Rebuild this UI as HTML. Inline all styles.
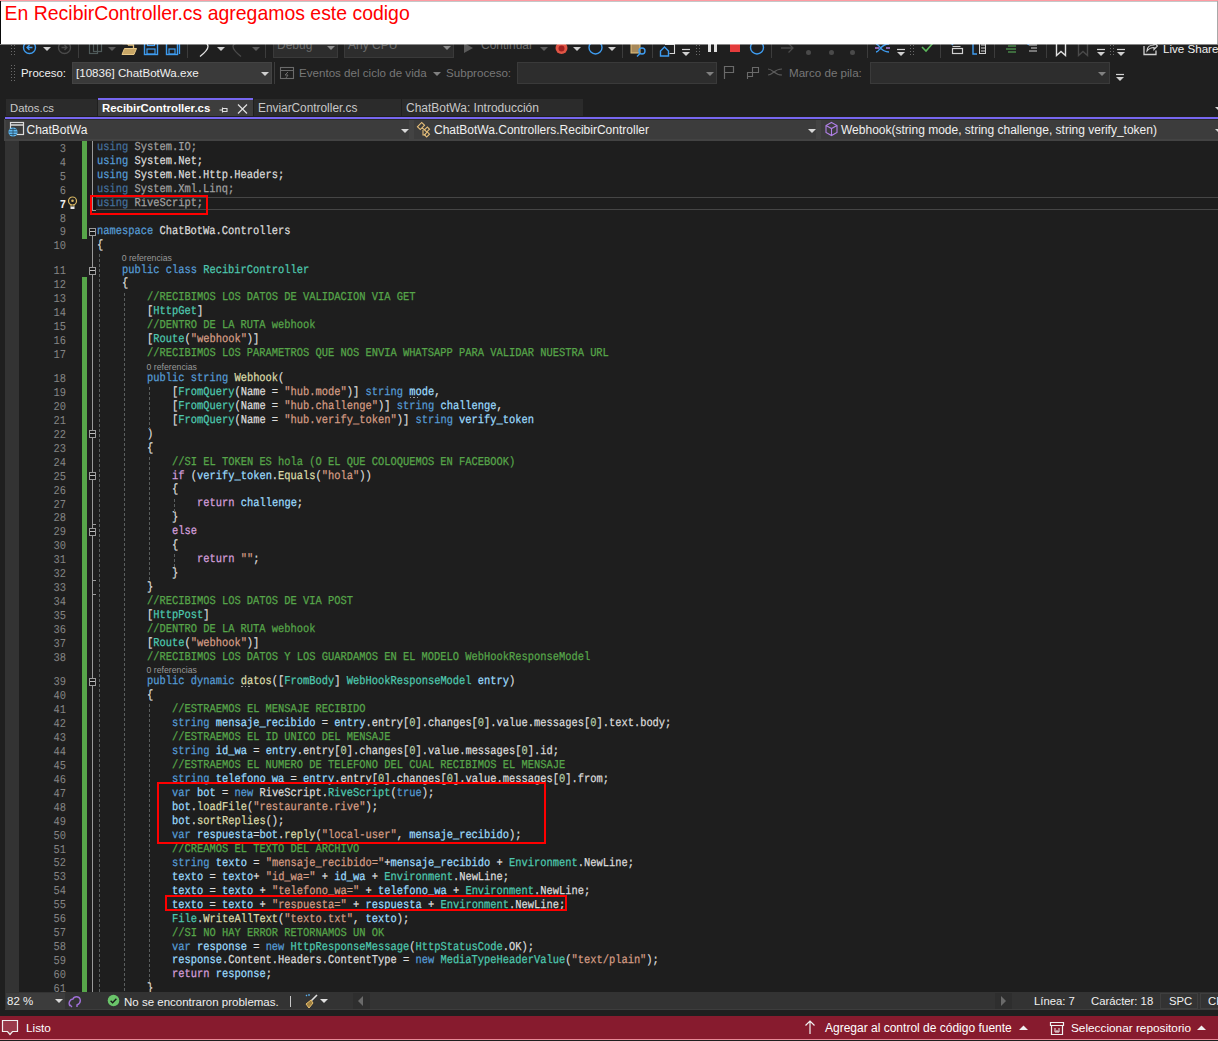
<!DOCTYPE html><html><head><meta charset="utf-8"><style>
*{margin:0;padding:0;box-sizing:border-box}
html,body{width:1218px;height:1041px;overflow:hidden;background:#1f1f1f}
body{position:relative;font-family:"Liberation Sans",sans-serif;font-size:12px;color:#dcdcdc}
.a{position:absolute}
.ui{font-family:"Liberation Sans",sans-serif;font-size:12px;white-space:pre;line-height:14px}
.cl{position:absolute;white-space:pre;text-rendering:geometricPrecision;-webkit-text-stroke:0.25px currentColor;font-family:"Liberation Mono",monospace;font-size:12px;transform:scaleX(0.8667);transform-origin:0 0;line-height:14px;letter-spacing:0.0px;height:14px}
.ln{position:absolute;white-space:pre;text-rendering:geometricPrecision;transform:scaleX(0.8667);transform-origin:100% 0;font-family:"Liberation Mono",monospace;font-size:12px;line-height:14px;letter-spacing:0.0px;color:#858585;text-align:right;width:40px;left:26px}
.lens{position:absolute;font-family:"Liberation Sans",sans-serif;font-size:8.7px;color:#999;white-space:pre;line-height:11px}
.k{color:#569cd6}.c{color:#d8a0df}.t{color:#4ec9b0}.m{color:#dcdcaa}.p{color:#9cdcfe}.s{color:#d69d85}.g{color:#57a64a}.d{color:#dcdcdc}.n{color:#b5cea8}
.dim .k{color:#45709c}.dim .d{color:#a0a0a0}
.guide{position:absolute;width:1px;background:repeating-linear-gradient(to bottom,#5a5e5e 0 3px,transparent 3px 5px)}
</style></head><body>

<div class="a" style="left:0;top:0;width:1218px;height:92px;background:#1f1f1f"></div>
<div class="a" style="left:10px;top:44px;width:5px;height:12px;background:radial-gradient(circle,#6a6a6a 0.6px,transparent 0.9px) 0 0/3px 3px"></div>
<svg class="a" style="left:22px;top:40px" width="15" height="15" viewBox="0 0 15 15"><circle cx="7.5" cy="7.5" r="6" fill="none" stroke="#3e9cf0" stroke-width="1.4"/><path d="M10.5 7.5H5M7.5 5L5 7.5L7.5 10" fill="none" stroke="#3e9cf0" stroke-width="1.3"/></svg>
<div class="a" style="left:43px;top:47px;width:0;height:0;border-left:4px solid transparent;border-right:4px solid transparent;border-top:4px solid #d0d0d0"></div>
<svg class="a" style="left:57px;top:40px" width="15" height="15" viewBox="0 0 15 15"><circle cx="7.5" cy="7.5" r="6" fill="none" stroke="#4a4a4a" stroke-width="1.4"/><path d="M4.5 7.5H10M7.5 5L10 7.5L7.5 10" fill="none" stroke="#4a4a4a" stroke-width="1.3"/></svg>
<div class="a" style="left:78px;top:44px;width:1px;height:14px;background:#3c3c3c"></div>
<svg class="a" style="left:88px;top:40px" width="16" height="16" viewBox="0 0 16 16"><rect x="1.5" y="3.5" width="8" height="10" fill="none" stroke="#4f5a5a" stroke-width="1.2"/><rect x="5.5" y="1.5" width="8" height="10" fill="none" stroke="#4f5a5a" stroke-width="1.2"/></svg>
<div class="a" style="left:108px;top:47px;width:0;height:0;border-left:4px solid transparent;border-right:4px solid transparent;border-top:4px solid #5a5a5a"></div>
<svg class="a" style="left:121px;top:40px" width="16" height="16" viewBox="0 0 16 16"><path d="M1.5 3.5h5l1 1.5h5v3" fill="none" stroke="#e3c27e" stroke-width="1.3"/><path d="M1 14.5l2.5-6h12l-2.5 6z" fill="#c8a666" stroke="#e8c887" stroke-width="1"/></svg>
<svg class="a" style="left:143px;top:40px" width="16" height="16" viewBox="0 0 16 16"><rect x="1.5" y="1.5" width="13" height="13" fill="none" stroke="#3e9cf0" stroke-width="1.4"/><rect x="4" y="9" width="8" height="5" fill="none" stroke="#3e9cf0" stroke-width="1.2"/><rect x="4.5" y="1.5" width="7" height="4" fill="none" stroke="#3e9cf0" stroke-width="1.2"/></svg>
<svg class="a" style="left:165px;top:40px" width="16" height="16" viewBox="0 0 16 16"><rect x="1.5" y="2.5" width="11" height="12" fill="none" stroke="#3e9cf0" stroke-width="1.4"/><rect x="4" y="9" width="6" height="5" fill="none" stroke="#3e9cf0" stroke-width="1.2"/><path d="M14.5 1v13" stroke="#3e9cf0" stroke-width="1.3"/></svg>
<div class="a" style="left:187px;top:44px;width:1px;height:14px;background:#3c3c3c"></div>
<svg class="a" style="left:196px;top:40px" width="16" height="18" viewBox="0 0 16 18"><path d="M4 2.5c3-1 8 0 8 4 0 3-3 6-8 10" fill="none" stroke="#e0e0e0" stroke-width="1.3"/></svg>
<div class="a" style="left:217px;top:47px;width:0;height:0;border-left:4px solid transparent;border-right:4px solid transparent;border-top:4px solid #d0d0d0"></div>
<svg class="a" style="left:231px;top:40px" width="14" height="18" viewBox="0 0 14 18"><path d="M10 2.5c-3 0-8 1-8 4 0 3 3 6 8 10" fill="none" stroke="#4a4a4a" stroke-width="1.3"/></svg>
<div class="a" style="left:252px;top:47px;width:0;height:0;border-left:4px solid transparent;border-right:4px solid transparent;border-top:4px solid #5a5a5a"></div>
<div class="a" style="left:265px;top:44px;width:1px;height:14px;background:#3c3c3c"></div>
<div class="a" style="left:273px;top:36px;width:65px;height:22px;background:#2d2d2d;border:1px solid #3a3a3a"></div>
<div class="a ui" style="left:277px;top:38px;color:#6a6a6a">Debug</div>
<div class="a" style="left:327px;top:46px;width:0;height:0;border-left:4px solid transparent;border-right:4px solid transparent;border-top:4px solid #8a8a8a"></div>
<div class="a" style="left:344px;top:36px;width:110px;height:22px;background:#2d2d2d;border:1px solid #3a3a3a"></div>
<div class="a ui" style="left:348px;top:38px;color:#6a6a6a">Any CPU</div>
<div class="a" style="left:443px;top:46px;width:0;height:0;border-left:4px solid transparent;border-right:4px solid transparent;border-top:4px solid #8a8a8a"></div>
<svg class="a" style="left:463px;top:43px" width="12" height="10" viewBox="0 0 12 10"><path d="M1 0L10 5L1 10z" fill="#5a5a5a"/></svg>
<div class="a ui" style="left:481px;top:38px;color:#6a6a6a">Continuar</div>
<div class="a" style="left:540px;top:47px;width:0;height:0;border-left:4px solid transparent;border-right:4px solid transparent;border-top:4px solid #5a5a5a"></div>
<svg class="a" style="left:554px;top:40px" width="15" height="15" viewBox="0 0 15 15"><circle cx="7.5" cy="8" r="6" fill="#e05545"/><circle cx="7.5" cy="8.5" r="3" fill="#a02020"/></svg>
<div class="a" style="left:573px;top:47px;width:0;height:0;border-left:4px solid transparent;border-right:4px solid transparent;border-top:4px solid #d0d0d0"></div>
<svg class="a" style="left:587px;top:40px" width="17" height="15" viewBox="0 0 17 15"><circle cx="8.5" cy="7.5" r="6.5" fill="none" stroke="#3e9cf0" stroke-width="1.4"/></svg>
<div class="a" style="left:608px;top:47px;width:0;height:0;border-left:4px solid transparent;border-right:4px solid transparent;border-top:4px solid #d0d0d0"></div>
<div class="a" style="left:622px;top:44px;width:1px;height:14px;background:#3c3c3c"></div>
<svg class="a" style="left:630px;top:40px" width="17" height="18" viewBox="0 0 17 18"><rect x="1" y="2" width="9" height="11" fill="#a8895a" stroke="#e3c27e"/><circle cx="12" cy="11" r="3" fill="none" stroke="#3e9cf0" stroke-width="1.4"/><path d="M10 13.5L7 16.5" stroke="#3e9cf0" stroke-width="1.5"/></svg>
<div class="a" style="left:652px;top:44px;width:1px;height:14px;background:#3c3c3c"></div>
<svg class="a" style="left:659px;top:40px" width="17" height="18" viewBox="0 0 17 18"><path d="M6 4.5h9.5v9h-5" fill="none" stroke="#d8d8d8" stroke-width="1.1"/><path d="M1.5 11l4-4 4 4v5h-8z" fill="none" stroke="#3e9cf0" stroke-width="1.4"/></svg>
<svg class="a" style="left:682px;top:48px" width="9" height="9" viewBox="0 0 9 9"><path d="M0 1.5h8" stroke="#d0d0d0" stroke-width="1.2"/><path d="M0 4h8l-4 4z" fill="#d0d0d0"/></svg>
<div class="a" style="left:695px;top:44px;width:5px;height:12px;background:radial-gradient(circle,#6a6a6a 0.6px,transparent 0.9px) 0 0/3px 3px"></div>
<div class="a" style="left:708px;top:42px;width:3px;height:10px;background:#e0e0e0"></div>
<div class="a" style="left:714px;top:42px;width:3px;height:10px;background:#e0e0e0"></div>
<div class="a" style="left:730px;top:42px;width:10px;height:10px;background:#e43c3c"></div>
<svg class="a" style="left:749px;top:40px" width="16" height="15" viewBox="0 0 16 15"><circle cx="8" cy="7.5" r="6.5" fill="none" stroke="#3e9cf0" stroke-width="1.4"/></svg>
<div class="a" style="left:771px;top:44px;width:1px;height:14px;background:#3c3c3c"></div>
<svg class="a" style="left:780px;top:42px" width="15" height="12" viewBox="0 0 15 12"><path d="M1 6h12M8.5 1.5L13 6l-4.5 4.5" fill="none" stroke="#4a4a4a" stroke-width="1.3"/></svg>
<div class="a" style="left:806px;top:50px;width:5px;height:5px;border-radius:50%;background:#4a4a4a"></div>
<div class="a" style="left:829px;top:50px;width:5px;height:5px;border-radius:50%;background:#4a4a4a"></div>
<div class="a" style="left:850px;top:50px;width:5px;height:5px;border-radius:50%;background:#4a4a4a"></div>
<div class="a" style="left:867px;top:44px;width:1px;height:14px;background:#3c3c3c"></div>
<svg class="a" style="left:874px;top:40px" width="17" height="16" viewBox="0 0 17 16"><path d="M2 4c4 0 4 8 13 8M2 12c4 0 4-8 13-8" fill="none" stroke="#3e9cf0" stroke-width="1.4"/><path d="M1 8h4M12 8h4" stroke="#b080e0" stroke-width="1.5"/></svg>
<svg class="a" style="left:897px;top:48px" width="9" height="9" viewBox="0 0 9 9"><path d="M0 1.5h8" stroke="#d0d0d0" stroke-width="1.2"/><path d="M0 4h8l-4 4z" fill="#d0d0d0"/></svg>
<div class="a" style="left:909px;top:44px;width:5px;height:12px;background:radial-gradient(circle,#6a6a6a 0.6px,transparent 0.9px) 0 0/3px 3px"></div>
<svg class="a" style="left:919px;top:40px" width="16" height="16" viewBox="0 0 16 16"><path d="M3 7l4 4 7-8" fill="none" stroke="#5cb85c" stroke-width="1.6"/></svg>
<div class="a" style="left:940px;top:44px;width:1px;height:14px;background:#3c3c3c"></div>
<svg class="a" style="left:948px;top:40px" width="16" height="16" viewBox="0 0 16 16"><path d="M2 2l3 3" stroke="#3e9cf0" stroke-width="1.5"/><rect x="4.5" y="8.5" width="10" height="5" fill="none" stroke="#d0d0d0" stroke-width="1.2"/><path d="M4.5 6.5h8" stroke="#d0d0d0"/></svg>
<svg class="a" style="left:971px;top:40px" width="16" height="16" viewBox="0 0 16 16"><path d="M2 2v12h4" fill="none" stroke="#3e9cf0" stroke-width="1.4"/><rect x="8.5" y="2.5" width="6" height="11" fill="none" stroke="#d0d0d0"/><path d="M10 5h4M10 8h4M10 11h4" stroke="#d0d0d0"/></svg>
<div class="a" style="left:994px;top:44px;width:1px;height:14px;background:#3c3c3c"></div>
<svg class="a" style="left:1004px;top:40px" width="14" height="16" viewBox="0 0 14 16"><path d="M2 3h10M4 6h8M2 9h10M4 12h8" stroke="#5cb85c" stroke-width="1.2"/></svg>
<svg class="a" style="left:1023px;top:40px" width="15" height="16" viewBox="0 0 15 16"><path d="M1 1l5 4" stroke="#3e9cf0" stroke-width="1.3"/><path d="M6 5h8M8 8h6M6 11h8" stroke="#d0d0d0" stroke-width="1.2"/></svg>
<div class="a" style="left:1046px;top:44px;width:1px;height:14px;background:#3c3c3c"></div>
<svg class="a" style="left:1055px;top:40px" width="12" height="17" viewBox="0 0 12 17"><path d="M1.5 1.5h9v14l-4.5-4-4.5 4z" fill="none" stroke="#e0e0e0" stroke-width="1.4"/></svg>
<svg class="a" style="left:1077px;top:40px" width="12" height="17" viewBox="0 0 12 17"><path d="M1.5 1.5h9v14l-4.5-4-4.5 4z" fill="none" stroke="#4a4a4a" stroke-width="1.4"/></svg>
<svg class="a" style="left:1097px;top:48px" width="9" height="9" viewBox="0 0 9 9"><path d="M0 1.5h8" stroke="#d0d0d0" stroke-width="1.2"/><path d="M0 4h8l-4 4z" fill="#d0d0d0"/></svg>
<div class="a" style="left:1109px;top:44px;width:5px;height:12px;background:radial-gradient(circle,#6a6a6a 0.6px,transparent 0.9px) 0 0/3px 3px"></div>
<svg class="a" style="left:1117px;top:48px" width="9" height="9" viewBox="0 0 9 9"><path d="M0 1.5h8" stroke="#d0d0d0" stroke-width="1.2"/><path d="M0 4h8l-4 4z" fill="#d0d0d0"/></svg>
<svg class="a" style="left:1142px;top:40px" width="16" height="16" viewBox="0 0 16 16"><path d="M2 6v8.5h12v-4" fill="none" stroke="#d0d0d0" stroke-width="1.3"/><path d="M5 11c0-4 3-6 7-6V2.5l3.5 3.5L12 9.5V7.5c-3 0-5 1-7 3.5z" fill="none" stroke="#d0d0d0" stroke-width="1.2"/></svg>
<div class="a ui" style="left:1163px;top:42px;color:#f0f0f0;font-size:11.6px">Live Share</div>
<div class="a" style="left:10px;top:64px;width:5px;height:18px;background:radial-gradient(circle,#6a6a6a 0.6px,transparent 0.9px) 0 0/3px 3px"></div>
<div class="a ui" style="left:21px;top:66px;color:#f0f0f0;font-size:11.4px">Proceso:</div>
<div class="a" style="left:72px;top:62px;width:200px;height:22px;background:#3a3a3a;border:1px solid #434343"></div>
<div class="a ui" style="left:76px;top:66px;color:#f0f0f0;font-size:11.6px">[10836] ChatBotWa.exe</div>
<div class="a" style="left:261px;top:72px;width:0;height:0;border-left:4px solid transparent;border-right:4px solid transparent;border-top:4px solid #d0d0d0"></div>
<div class="a" style="left:274px;top:62px;width:1px;height:22px;background:#3c3c3c"></div>
<svg class="a" style="left:279px;top:66px" width="16" height="14" viewBox="0 0 16 14"><rect x="1.5" y="1.5" width="13" height="11" fill="none" stroke="#6a6a6a" stroke-width="1.1"/><path d="M1.5 4.5h13" stroke="#6a6a6a"/><path d="M9 6l-3 3h3l-2 3" fill="none" stroke="#6a6a6a"/></svg>
<div class="a ui" style="left:299px;top:66px;color:#777777;font-size:11.6px">Eventos del ciclo de vida</div>
<div class="a" style="left:433px;top:72px;width:0;height:0;border-left:4px solid transparent;border-right:4px solid transparent;border-top:4px solid #808080"></div>
<div class="a ui" style="left:446px;top:66px;color:#777777;font-size:11.6px">Subproceso:</div>
<div class="a" style="left:517px;top:62px;width:200px;height:22px;background:#2d2d2d;border:1px solid #3a3a3a"></div>
<div class="a" style="left:706px;top:72px;width:0;height:0;border-left:4px solid transparent;border-right:4px solid transparent;border-top:4px solid #808080"></div>
<svg class="a" style="left:722px;top:64px" width="14" height="16" viewBox="0 0 14 16"><path d="M2.5 15V2.5h9v6h-9" fill="none" stroke="#6a6a6a" stroke-width="1.2"/></svg>
<svg class="a" style="left:745px;top:64px" width="16" height="16" viewBox="0 0 16 16"><path d="M2.5 15V8.5h5v4h-5M7.5 8V3.5h6v5h-6" fill="none" stroke="#6a6a6a" stroke-width="1.1"/></svg>
<svg class="a" style="left:767px;top:64px" width="16" height="16" viewBox="0 0 16 16"><path d="M1 5c5 0 6 6 14 6M1 11c5 0 6-6 14-6" fill="none" stroke="#5a5a5a" stroke-width="1.1"/></svg>
<div class="a ui" style="left:789px;top:66px;color:#777777;font-size:11.6px">Marco de pila:</div>
<div class="a" style="left:870px;top:62px;width:240px;height:22px;background:#2d2d2d;border:1px solid #3a3a3a"></div>
<div class="a" style="left:1098px;top:72px;width:0;height:0;border-left:4px solid transparent;border-right:4px solid transparent;border-top:4px solid #808080"></div>
<svg class="a" style="left:1116px;top:73px" width="9" height="10" viewBox="0 0 9 10"><path d="M0 1.5h8" stroke="#d0d0d0" stroke-width="1.2"/><path d="M0 4h8l-4 4z" fill="#d0d0d0"/></svg>
<div class="a" style="left:6px;top:99px;width:91px;height:17px;background:#2b2b2b"></div>
<div class="a ui" style="left:10px;top:101px;color:#c8c8c8;font-size:11.3px">Datos.cs</div>
<div class="a" style="left:98px;top:98px;width:155px;height:2px;background:#7767f0"></div>
<div class="a" style="left:98px;top:100px;width:155px;height:16px;background:#3d3d3d"></div>
<div class="a ui" style="left:102px;top:101px;font-weight:bold;color:#fff;font-size:11.4px">RecibirController.cs</div>
<svg class="a" style="left:219px;top:104px" width="10" height="10" viewBox="0 0 10 10"><path d="M0.5 6h3M3.5 3.5v5M4 4.5h4v3h-4" fill="none" stroke="#e0e0e0" stroke-width="1.1"/></svg>
<svg class="a" style="left:237px;top:104px" width="11" height="10" viewBox="0 0 11 10"><path d="M1 0.5l9 9M10 0.5l-9 9" stroke="#e0e0e0" stroke-width="1.2"/></svg>
<div class="a" style="left:254px;top:99px;width:147px;height:17px;background:#2b2b2b"></div>
<div class="a ui" style="left:258px;top:101px;color:#c8c8c8;font-size:11.85px">EnviarController.cs</div>
<div class="a" style="left:402px;top:99px;width:181px;height:17px;background:#2b2b2b"></div>
<div class="a ui" style="left:406px;top:101px;color:#c8c8c8;font-size:12px">ChatBotWa: Introducción</div>
<div class="a" style="left:5px;top:117px;width:1213px;height:2px;background:#7767f0"></div>
<div class="a" style="left:4px;top:119px;width:1214px;height:22px;background:#434343"></div>
<div class="a" style="left:5px;top:119px;width:1213px;height:1px;background:#2a2a2a"></div>
<div class="a" style="left:6px;top:120px;width:403px;height:19px;background:#3c3c3c"></div>
<div class="a" style="left:414px;top:120px;width:402px;height:19px;background:#3c3c3c"></div>
<div class="a" style="left:821px;top:120px;width:397px;height:19px;background:#3c3c3c"></div>
<div class="a" style="left:401px;top:129px;width:0;height:0;border-left:4px solid transparent;border-right:4px solid transparent;border-top:4px solid #d8d8d8"></div>
<div class="a" style="left:808px;top:129px;width:0;height:0;border-left:4px solid transparent;border-right:4px solid transparent;border-top:4px solid #d8d8d8"></div>
<svg class="a" style="left:7px;top:121px" width="18" height="16" viewBox="0 0 18 16"><rect x="3.5" y="1.5" width="13" height="12" fill="none" stroke="#dcdcdc" stroke-width="1.2"/><path d="M3.5 4h13" stroke="#dcdcdc" stroke-width="1.5"/><circle cx="6" cy="11" r="4.6" fill="#5fb8f0"/><path d="M1.4 11h9.2M6 6.4v9.2M2.5 8.5h7M2.5 13.5h7" stroke="#2a4a60" stroke-width="0.8"/></svg>
<svg class="a" style="left:416px;top:121px" width="17" height="17" viewBox="0 0 17 17"><rect x="2" y="3" width="6" height="4" transform="rotate(-45 5 5)" fill="none" stroke="#e8c07a" stroke-width="1.1"/><rect x="9" y="7" width="4" height="3" transform="rotate(-45 11 8.5)" fill="none" stroke="#e8c07a" stroke-width="1.1"/><rect x="9" y="12" width="4" height="3" transform="rotate(-45 11 13.5)" fill="none" stroke="#e8c07a" stroke-width="1.1"/><path d="M6 7l3 2M7 9v5h3" fill="none" stroke="#e8c07a" stroke-width="1.1"/></svg>
<svg class="a" style="left:824px;top:121px" width="15" height="16" viewBox="0 0 15 16"><path d="M7.5 1.5l5.5 3v7l-5.5 3-5.5-3v-7z M2 4.5l5.5 3 5.5-3 M7.5 7.5v7" fill="none" stroke="#b180e8" stroke-width="1.1"/></svg>
<div class="a" style="left:1215px;top:107px;width:0;height:0;border-left:4px solid transparent;border-right:4px solid transparent;border-top:4px solid #d8d8d8"></div>
<div class="a" style="left:1215px;top:129px;width:0;height:0;border-left:4px solid transparent;border-right:4px solid transparent;border-top:4px solid #d8d8d8"></div>
<div class="a ui" style="left:26.5px;top:123px;color:#f0f0f0">ChatBotWa</div>
<div class="a ui" style="left:434px;top:123px;color:#f0f0f0">ChatBotWa.Controllers.RecibirController</div>
<div class="a ui" style="left:841px;top:123px;color:#f0f0f0">Webhook(string mode, string challenge, string verify_token)</div>
<div class="a" style="left:5px;top:141px;width:1213px;height:851px;background:#1e1e1e"></div>
<div class="a" style="left:5px;top:141px;width:14px;height:851px;background:#333333"></div>
<div class="a" style="left:82px;top:141px;width:5px;height:98px;background:#57a64a"></div>
<div class="a" style="left:82px;top:277px;width:5px;height:715px;background:#57a64a"></div>
<div class="ln" style="top:141.90px">3</div>
<div class="cl dim" style="left:96.70px;top:140.26px"><span class="k">using</span><span class="d"> System.IO;</span></div>
<div class="ln" style="top:155.83px">4</div>
<div class="cl" style="left:96.70px;top:154.21px"><span class="k">using</span><span class="d"> System.Net;</span></div>
<div class="ln" style="top:169.76px">5</div>
<div class="cl" style="left:96.70px;top:168.16px"><span class="k">using</span><span class="d"> System.Net.Http.Headers;</span></div>
<div class="ln" style="top:183.69px">6</div>
<div class="cl dim" style="left:96.70px;top:182.11px"><span class="k">using</span><span class="d"> System.Xml.Linq;</span></div>
<div class="ln" style="top:197.62px;color:#f0f0f0;font-weight:bold">7</div>
<div class="cl dim" style="left:96.70px;top:196.06px"><span class="k">using</span><span class="d"> RiveScript;</span></div>
<div class="ln" style="top:211.55px">8</div>
<div class="cl" style="left:96.70px;top:210.01px"></div>
<div class="ln" style="top:225.48px">9</div>
<div class="cl" style="left:96.70px;top:223.96px"><span class="k">namespace</span><span class="d"> ChatBotWa.Controllers</span></div>
<div class="ln" style="top:239.41px">10</div>
<div class="cl" style="left:96.70px;top:237.91px"><span class="d">{</span></div>
<div class="lens" style="left:121.66px;top:253.34px">0 referencias</div>
<div class="ln" style="top:264.01px">11</div>
<div class="cl" style="left:121.66px;top:262.53px"><span class="k">public</span><span class="d"> </span><span class="k">class</span><span class="d"> </span><span class="t">RecibirController</span></div>
<div class="ln" style="top:277.94px">12</div>
<div class="cl" style="left:121.66px;top:276.48px"><span class="d">{</span></div>
<div class="ln" style="top:291.87px">13</div>
<div class="cl" style="left:146.62px;top:290.43px"><span class="g">//RECIBIMOS LOS DATOS DE VALIDACION VIA GET</span></div>
<div class="ln" style="top:305.80px">14</div>
<div class="cl" style="left:146.62px;top:304.38px"><span class="d">[</span><span class="t">HttpGet</span><span class="d">]</span></div>
<div class="ln" style="top:319.73px">15</div>
<div class="cl" style="left:146.62px;top:318.33px"><span class="g">//DENTRO DE LA RUTA webhook</span></div>
<div class="ln" style="top:333.66px">16</div>
<div class="cl" style="left:146.62px;top:332.28px"><span class="d">[</span><span class="t">Route</span><span class="d">(</span><span class="s">"webhook"</span><span class="d">)]</span></div>
<div class="ln" style="top:347.59px">17</div>
<div class="cl" style="left:146.62px;top:346.23px"><span class="g">//RECIBIMOS LOS PARAMETROS QUE NOS ENVIA WHATSAPP PARA VALIDAR NUESTRA URL</span></div>
<div class="lens" style="left:146.62px;top:361.52px">0 referencias</div>
<div class="ln" style="top:372.19px">18</div>
<div class="cl" style="left:146.62px;top:370.85px"><span class="k">public</span><span class="d"> </span><span class="k">string</span><span class="d"> </span><span class="m">Webhook</span><span class="d">(</span></div>
<div class="ln" style="top:386.12px">19</div>
<div class="cl" style="left:171.58px;top:384.80px"><span class="d">[</span><span class="t">FromQuery</span><span class="d">(Name = </span><span class="s">"hub.mode"</span><span class="d">)] </span><span class="k">string</span><span class="d"> </span><span class="p">mode</span><span class="d">,</span></div>
<div class="ln" style="top:400.05px">20</div>
<div class="cl" style="left:171.58px;top:398.75px"><span class="d">[</span><span class="t">FromQuery</span><span class="d">(Name = </span><span class="s">"hub.challenge"</span><span class="d">)] </span><span class="k">string</span><span class="d"> </span><span class="p">challenge</span><span class="d">,</span></div>
<div class="ln" style="top:413.98px">21</div>
<div class="cl" style="left:171.58px;top:412.70px"><span class="d">[</span><span class="t">FromQuery</span><span class="d">(Name = </span><span class="s">"hub.verify_token"</span><span class="d">)] </span><span class="k">string</span><span class="d"> </span><span class="p">verify_token</span></div>
<div class="ln" style="top:427.91px">22</div>
<div class="cl" style="left:146.62px;top:426.65px"><span class="d">)</span></div>
<div class="ln" style="top:441.84px">23</div>
<div class="cl" style="left:146.62px;top:440.60px"><span class="d">{</span></div>
<div class="ln" style="top:455.77px">24</div>
<div class="cl" style="left:171.58px;top:454.55px"><span class="g">//SI EL TOKEN ES hola (O EL QUE COLOQUEMOS EN FACEBOOK)</span></div>
<div class="ln" style="top:469.70px">25</div>
<div class="cl" style="left:171.58px;top:468.50px"><span class="c">if</span><span class="d"> (</span><span class="p">verify_token</span><span class="d">.</span><span class="m">Equals</span><span class="d">(</span><span class="s">"hola"</span><span class="d">))</span></div>
<div class="ln" style="top:483.63px">26</div>
<div class="cl" style="left:171.58px;top:482.45px"><span class="d">{</span></div>
<div class="ln" style="top:497.56px">27</div>
<div class="cl" style="left:196.54px;top:496.40px"><span class="c">return</span><span class="d"> </span><span class="p">challenge</span><span class="d">;</span></div>
<div class="ln" style="top:511.49px">28</div>
<div class="cl" style="left:171.58px;top:510.35px"><span class="d">}</span></div>
<div class="ln" style="top:525.42px">29</div>
<div class="cl" style="left:171.58px;top:524.30px"><span class="c">else</span></div>
<div class="ln" style="top:539.35px">30</div>
<div class="cl" style="left:171.58px;top:538.25px"><span class="d">{</span></div>
<div class="ln" style="top:553.28px">31</div>
<div class="cl" style="left:196.54px;top:552.20px"><span class="c">return</span><span class="d"> </span><span class="s">""</span><span class="d">;</span></div>
<div class="ln" style="top:567.21px">32</div>
<div class="cl" style="left:171.58px;top:566.15px"><span class="d">}</span></div>
<div class="ln" style="top:581.14px">33</div>
<div class="cl" style="left:146.62px;top:580.10px"><span class="d">}</span></div>
<div class="ln" style="top:595.07px">34</div>
<div class="cl" style="left:146.62px;top:594.05px"><span class="g">//RECIBIMOS LOS DATOS DE VIA POST</span></div>
<div class="ln" style="top:609.00px">35</div>
<div class="cl" style="left:146.62px;top:608.00px"><span class="d">[</span><span class="t">HttpPost</span><span class="d">]</span></div>
<div class="ln" style="top:622.93px">36</div>
<div class="cl" style="left:146.62px;top:621.95px"><span class="g">//DENTRO DE LA RUTA webhook</span></div>
<div class="ln" style="top:636.86px">37</div>
<div class="cl" style="left:146.62px;top:635.90px"><span class="d">[</span><span class="t">Route</span><span class="d">(</span><span class="s">"webhook"</span><span class="d">)]</span></div>
<div class="ln" style="top:650.79px">38</div>
<div class="cl" style="left:146.62px;top:649.85px"><span class="g">//RECIBIMOS LOS DATOS Y LOS GUARDAMOS EN EL MODELO WebHookResponseModel</span></div>
<div class="lens" style="left:146.62px;top:664.72px">0 referencias</div>
<div class="ln" style="top:675.39px">39</div>
<div class="cl" style="left:146.62px;top:674.47px"><span class="k">public</span><span class="d"> </span><span class="k">dynamic</span><span class="d"> </span><span class="m">datos</span><span class="d">([</span><span class="t">FromBody</span><span class="d">] </span><span class="t">WebHookResponseModel</span><span class="d"> </span><span class="p">entry</span><span class="d">)</span></div>
<div class="ln" style="top:689.32px">40</div>
<div class="cl" style="left:146.62px;top:688.42px"><span class="d">{</span></div>
<div class="ln" style="top:703.25px">41</div>
<div class="cl" style="left:171.58px;top:702.37px"><span class="g">//ESTRAEMOS EL MENSAJE RECIBIDO</span></div>
<div class="ln" style="top:717.18px">42</div>
<div class="cl" style="left:171.58px;top:716.32px"><span class="k">string</span><span class="d"> </span><span class="p">mensaje_recibido</span><span class="d"> = </span><span class="p">entry</span><span class="d">.entry[</span><span class="n">0</span><span class="d">].changes[</span><span class="n">0</span><span class="d">].value.messages[</span><span class="n">0</span><span class="d">].text.body;</span></div>
<div class="ln" style="top:731.11px">43</div>
<div class="cl" style="left:171.58px;top:730.27px"><span class="g">//ESTRAEMOS EL ID UNICO DEL MENSAJE</span></div>
<div class="ln" style="top:745.04px">44</div>
<div class="cl" style="left:171.58px;top:744.22px"><span class="k">string</span><span class="d"> </span><span class="p">id_wa</span><span class="d"> = </span><span class="p">entry</span><span class="d">.entry[</span><span class="n">0</span><span class="d">].changes[</span><span class="n">0</span><span class="d">].value.messages[</span><span class="n">0</span><span class="d">].id;</span></div>
<div class="ln" style="top:758.97px">45</div>
<div class="cl" style="left:171.58px;top:758.17px"><span class="g">//ESTRAEMOS EL NUMERO DE TELEFONO DEL CUAL RECIBIMOS EL MENSAJE</span></div>
<div class="ln" style="top:772.90px">46</div>
<div class="cl" style="left:171.58px;top:772.12px"><span class="k">string</span><span class="d"> </span><span class="p">telefono_wa</span><span class="d"> = </span><span class="p">entry</span><span class="d">.entry[</span><span class="n">0</span><span class="d">].changes[</span><span class="n">0</span><span class="d">].value.messages[</span><span class="n">0</span><span class="d">].from;</span></div>
<div class="ln" style="top:786.83px">47</div>
<div class="cl" style="left:171.58px;top:786.07px"><span class="k">var</span><span class="d"> </span><span class="p">bot</span><span class="d"> = </span><span class="k">new</span><span class="d"> RiveScript.</span><span class="t">RiveScript</span><span class="d">(</span><span class="k">true</span><span class="d">);</span></div>
<div class="ln" style="top:800.76px">48</div>
<div class="cl" style="left:171.58px;top:800.02px"><span class="p">bot</span><span class="d">.</span><span class="m">loadFile</span><span class="d">(</span><span class="s">"restaurante.rive"</span><span class="d">);</span></div>
<div class="ln" style="top:814.69px">49</div>
<div class="cl" style="left:171.58px;top:813.97px"><span class="p">bot</span><span class="d">.</span><span class="m">sortReplies</span><span class="d">();</span></div>
<div class="ln" style="top:828.62px">50</div>
<div class="cl" style="left:171.58px;top:827.92px"><span class="k">var</span><span class="d"> </span><span class="p">respuesta</span><span class="d">=</span><span class="p">bot</span><span class="d">.</span><span class="m">reply</span><span class="d">(</span><span class="s">"local-user"</span><span class="d">, </span><span class="p">mensaje_recibido</span><span class="d">);</span></div>
<div class="ln" style="top:842.55px">51</div>
<div class="cl" style="left:171.58px;top:841.87px"><span class="g">//CREAMOS EL TEXTO DEL ARCHIVO</span></div>
<div class="ln" style="top:856.48px">52</div>
<div class="cl" style="left:171.58px;top:855.82px"><span class="k">string</span><span class="d"> </span><span class="p">texto</span><span class="d"> = </span><span class="s">"mensaje_recibido="</span><span class="d">+</span><span class="p">mensaje_recibido</span><span class="d"> + </span><span class="t">Environment</span><span class="d">.NewLine;</span></div>
<div class="ln" style="top:870.41px">53</div>
<div class="cl" style="left:171.58px;top:869.77px"><span class="p">texto</span><span class="d"> = </span><span class="p">texto</span><span class="d">+ </span><span class="s">"id_wa="</span><span class="d"> + </span><span class="p">id_wa</span><span class="d"> + </span><span class="t">Environment</span><span class="d">.NewLine;</span></div>
<div class="ln" style="top:884.34px">54</div>
<div class="cl" style="left:171.58px;top:883.72px"><span class="p">texto</span><span class="d"> = </span><span class="p">texto</span><span class="d"> + </span><span class="s">"telefono_wa="</span><span class="d"> + </span><span class="p">telefono_wa</span><span class="d"> + </span><span class="t">Environment</span><span class="d">.NewLine;</span></div>
<div class="ln" style="top:898.27px">55</div>
<div class="cl" style="left:171.58px;top:897.67px"><span class="p">texto</span><span class="d"> = </span><span class="p">texto</span><span class="d"> + </span><span class="s">"respuesta="</span><span class="d"> + </span><span class="p">respuesta</span><span class="d"> + </span><span class="t">Environment</span><span class="d">.NewLine;</span></div>
<div class="ln" style="top:912.20px">56</div>
<div class="cl" style="left:171.58px;top:911.62px"><span class="t">File</span><span class="d">.</span><span class="m">WriteAllText</span><span class="d">(</span><span class="s">"texto.txt"</span><span class="d">, </span><span class="p">texto</span><span class="d">);</span></div>
<div class="ln" style="top:926.13px">57</div>
<div class="cl" style="left:171.58px;top:925.57px"><span class="g">//SI NO HAY ERROR RETORNAMOS UN OK</span></div>
<div class="ln" style="top:940.06px">58</div>
<div class="cl" style="left:171.58px;top:939.52px"><span class="k">var</span><span class="d"> </span><span class="p">response</span><span class="d"> = </span><span class="k">new</span><span class="d"> </span><span class="t">HttpResponseMessage</span><span class="d">(</span><span class="t">HttpStatusCode</span><span class="d">.OK);</span></div>
<div class="ln" style="top:953.99px">59</div>
<div class="cl" style="left:171.58px;top:953.47px"><span class="p">response</span><span class="d">.Content.Headers.ContentType = </span><span class="k">new</span><span class="d"> </span><span class="t">MediaTypeHeaderValue</span><span class="d">(</span><span class="s">"text/plain"</span><span class="d">);</span></div>
<div class="ln" style="top:967.92px">60</div>
<div class="cl" style="left:171.58px;top:967.42px"><span class="c">return</span><span class="d"> </span><span class="p">response</span><span class="d">;</span></div>
<div class="ln" style="top:981.85px">61</div>
<div class="cl" style="left:146.62px;top:981.37px"><span class="d">}</span></div>
<div class="a" style="left:92px;top:141px;width:1px;height:70px;background:#9a9a9a"></div>
<div class="a" style="left:92px;top:210px;width:4px;height:1px;background:#9a9a9a"></div>
<div class="a" style="left:89px;top:228px;width:7px;height:8px;border:1px solid #9a9a9a;background:#181818"></div>
<div class="a" style="left:90px;top:231px;width:5px;height:1px;background:#bdbdbd"></div>
<div class="a" style="left:89px;top:267px;width:7px;height:8px;border:1px solid #9a9a9a;background:#181818"></div>
<div class="a" style="left:90px;top:270px;width:5px;height:1px;background:#bdbdbd"></div>
<div class="a" style="left:89px;top:430px;width:7px;height:8px;border:1px solid #9a9a9a;background:#181818"></div>
<div class="a" style="left:90px;top:433px;width:5px;height:1px;background:#bdbdbd"></div>
<div class="a" style="left:89px;top:472px;width:7px;height:8px;border:1px solid #9a9a9a;background:#181818"></div>
<div class="a" style="left:90px;top:475px;width:5px;height:1px;background:#bdbdbd"></div>
<div class="a" style="left:89px;top:528px;width:7px;height:8px;border:1px solid #9a9a9a;background:#181818"></div>
<div class="a" style="left:90px;top:531px;width:5px;height:1px;background:#bdbdbd"></div>
<div class="a" style="left:89px;top:678px;width:7px;height:8px;border:1px solid #9a9a9a;background:#181818"></div>
<div class="a" style="left:90px;top:681px;width:5px;height:1px;background:#bdbdbd"></div>
<div class="a" style="left:92px;top:236px;width:1px;height:32px;background:#9a9a9a"></div>
<div class="a" style="left:92px;top:275px;width:1px;height:156px;background:#9a9a9a"></div>
<div class="a" style="left:92px;top:438px;width:1px;height:35px;background:#9a9a9a"></div>
<div class="a" style="left:92px;top:480px;width:1px;height:49px;background:#9a9a9a"></div>
<div class="a" style="left:92px;top:536px;width:1px;height:143px;background:#9a9a9a"></div>
<div class="a" style="left:92px;top:686px;width:1px;height:306px;background:#9a9a9a"></div>
<div class="a" style="left:92px;top:524px;width:4px;height:1px;background:#9a9a9a"></div>
<div class="a" style="left:92px;top:580px;width:4px;height:1px;background:#9a9a9a"></div>
<div class="a" style="left:92px;top:594px;width:4px;height:1px;background:#9a9a9a"></div>
<div class="guide" style="left:99px;top:254px;height:738px;background-position:0 0px"></div>
<div class="guide" style="left:124px;top:293px;height:699px;background-position:0 0px"></div>
<div class="guide" style="left:149px;top:387px;height:42px;background-position:0 0px"></div>
<div class="guide" style="left:149px;top:457px;height:125px;background-position:0 0px"></div>
<div class="guide" style="left:174px;top:499px;height:14px;background-position:0 0px"></div>
<div class="guide" style="left:174px;top:554px;height:14px;background-position:0 0px"></div>
<div class="guide" style="left:149px;top:704px;height:288px;background-position:0 0px"></div>
<div class="a" style="left:409.9px;top:396.5px;width:1.6px;height:1.6px;background:#9a9a9a"></div>
<div class="a" style="left:413.3px;top:396.5px;width:1.6px;height:1.6px;background:#9a9a9a"></div>
<div class="a" style="left:416.7px;top:396.5px;width:1.6px;height:1.6px;background:#9a9a9a"></div>
<div class="a" style="left:241.4px;top:685.5px;width:1.6px;height:1.6px;background:#9a9a9a"></div>
<div class="a" style="left:244.8px;top:685.5px;width:1.6px;height:1.6px;background:#9a9a9a"></div>
<div class="a" style="left:248.2px;top:685.5px;width:1.6px;height:1.6px;background:#9a9a9a"></div>
<div class="a" style="left:96px;top:197px;width:1122px;height:13px;border-top:1px solid #464646;border-bottom:1px solid #464646"></div>
<div class="a" style="left:93px;top:198px;width:3px;height:11px;background:#141414"></div>
<svg class="a" style="left:67px;top:196px" width="11" height="14" viewBox="0 0 11 14"><circle cx="5.5" cy="5" r="4" fill="none" stroke="#d9b864" stroke-width="1.2"/><circle cx="5.5" cy="4.8" r="1.3" fill="#d9b864"/><path d="M4 8v2.5M7 8v2.5" stroke="#d9b864" stroke-width="1"/><rect x="3.5" y="10.5" width="4" height="2.5" fill="#e8e8e8"/></svg>
<div class="a" style="left:90px;top:195px;width:118px;height:20px;border:2px solid #ff0000"></div>
<div class="a" style="left:157px;top:782px;width:389px;height:62px;border:2px solid #ff0000"></div>
<div class="a" style="left:165px;top:895px;width:402px;height:16px;border:2px solid #ff0000"></div>
<div class="a" style="left:5px;top:992px;width:1213px;height:18px;background:#333333"></div>
<div class="a" style="left:5px;top:1009px;width:1213px;height:1px;background:#3d3d3d"></div>
<div class="a" style="left:6px;top:993px;width:59px;height:16px;background:#3c3c3c"></div>
<div class="a ui" style="left:7px;top:994px;color:#f0f0f0;font-size:11.5px">82 %</div>
<div class="a" style="left:55px;top:999px;width:0;height:0;border-left:4px solid transparent;border-right:4px solid transparent;border-top:4px solid #d8d8d8"></div>
<svg class="a" style="left:67px;top:993px" width="15" height="16" viewBox="0 0 15 16"><path d="M3 13c-2-3 0-7 3-7 1-3 6-3 7 0 1 3-1 5-3 6v2M2 11l3 3" fill="none" stroke="#a070d8" stroke-width="1.4"/></svg>
<svg class="a" style="left:107px;top:994px" width="13" height="13" viewBox="0 0 13 13"><circle cx="6.5" cy="6.5" r="5.8" fill="#6ac46a"/><path d="M3.6 6.8l2 2 3.8-4" fill="none" stroke="#1a1a1a" stroke-width="1.4"/></svg>
<div class="a ui" style="left:124px;top:995px;color:#f0f0f0;font-size:11.5px">No se encontraron problemas.</div>
<div class="a" style="left:290px;top:996px;width:1px;height:11px;background:#c8c8c8"></div>
<svg class="a" style="left:303px;top:993px" width="16" height="16" viewBox="0 0 16 16"><path d="M14 2l-6 6" stroke="#e0e0e0" stroke-width="1.6"/><path d="M8 7l-5 4 3 4 4-5z" fill="#a08040" stroke="#e8c070" stroke-width="1"/><path d="M3 2l1 1M6 1v2" stroke="#5ab0f0" stroke-width="1.2"/></svg>
<div class="a" style="left:320px;top:999px;width:0;height:0;border-left:4px solid transparent;border-right:4px solid transparent;border-top:4px solid #e0e0e0"></div>
<div class="a" style="left:353px;top:993px;width:17px;height:16px;background:#2e2e2e"></div>
<svg class="a" style="left:357px;top:995px" width="8" height="12" viewBox="0 0 8 12"><path d="M6 1L1 6l5 5z" fill="#6a6a6a"/></svg>
<div class="a" style="left:995px;top:993px;width:17px;height:16px;background:#2e2e2e"></div>
<svg class="a" style="left:1000px;top:995px" width="8" height="12" viewBox="0 0 8 12"><path d="M1 1l5 5-5 5z" fill="#6a6a6a"/></svg>
<div class="a ui" style="left:1034px;top:994px;color:#f0f0f0;font-size:11.3px">Línea: 7</div>
<div class="a ui" style="left:1091px;top:994px;color:#f0f0f0;font-size:11.3px">Carácter: 18</div>
<div class="a" style="left:1160px;top:993px;width:38px;height:16px;border:1px solid #3f3f3f"></div>
<div class="a ui" style="left:1169px;top:994px;color:#f0f0f0;font-size:11.3px">SPC</div>
<div class="a" style="left:1200px;top:993px;width:30px;height:16px;border:1px solid #3f3f3f"></div>
<div class="a ui" style="left:1208px;top:994px;color:#f0f0f0;font-size:11.3px">CRLF</div>
<div class="a" style="left:0;top:1010px;width:1218px;height:6px;background:#1f1f1f"></div>
<div class="a" style="left:0;top:1016px;width:1218px;height:23px;background:#871b2e"></div>
<div class="a" style="left:0;top:1039px;width:1218px;height:1px;background:#e88a98"></div>
<div class="a" style="left:0;top:1040px;width:1218px;height:1px;background:#1f1f1f"></div>
<svg class="a" style="left:1px;top:1019px" width="18" height="19" viewBox="0 0 18 19"><path d="M1.5 1.5h15v11h-5l-2.5 3-2.5-3h-5z" fill="#9a3a4a" stroke="#f0f0f0" stroke-width="1.2"/></svg>
<div class="a ui" style="left:26px;top:1021px;color:#fff;font-size:11.8px">Listo</div>
<svg class="a" style="left:804px;top:1019px" width="12" height="17" viewBox="0 0 12 17"><path d="M6 15V2M1.5 6.5L6 2l4.5 4.5" fill="none" stroke="#f0f0f0" stroke-width="1.2"/></svg>
<div class="a ui" style="left:825px;top:1021px;color:#fff;font-size:12px">Agregar al control de código fuente</div>
<svg class="a" style="left:1019px;top:1025px" width="9" height="5" viewBox="0 0 9 5"><path d="M0 5L4.5 0.5 9 5z" fill="#f0f0f0"/></svg>
<svg class="a" style="left:1049px;top:1020px" width="16" height="16" viewBox="0 0 16 16"><path d="M1.5 2.5h13v3h-13zM2.5 5.5v9h11v-9" fill="none" stroke="#f0f0f0" stroke-width="1.2"/><path d="M6 8v4h4V8M8 10v2" fill="none" stroke="#f0f0f0" stroke-width="1"/></svg>
<div class="a ui" style="left:1071px;top:1021px;color:#fff;font-size:11.8px">Seleccionar repositorio</div>
<svg class="a" style="left:1197px;top:1025px" width="9" height="5" viewBox="0 0 9 5"><path d="M0 5L4.5 0.5 9 5z" fill="#f0f0f0"/></svg>
<div class="a" style="left:0;top:0;width:1218px;height:44px;background:#fff"></div>
<div class="a" style="left:0;top:44px;width:1218px;height:1px;background:rgba(255,255,255,0.45)"></div>
<div class="a" style="left:0;top:0;width:1218px;height:1px;background:#ff9aa2"></div>
<div class="a" style="left:0;top:1px;width:1218px;height:1px;background:#c4c8c8"></div>
<div class="a" style="left:0;top:1px;width:1px;height:43px;background:#0a0a0a"></div>
<div class="a" style="left:1217px;top:1px;width:1px;height:43px;background:#a8a8a8"></div>
<div class="a" style="left:4.6px;top:1px;font-family:'Liberation Sans',sans-serif;font-size:19.45px;color:#ff0000;white-space:pre;line-height:24px">En RecibirController.cs agregamos este codigo</div>
</body></html>
